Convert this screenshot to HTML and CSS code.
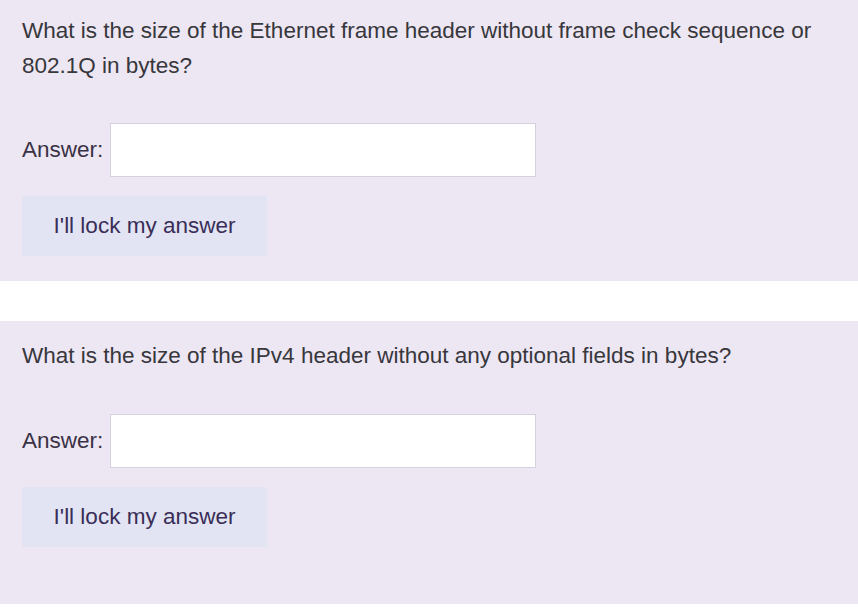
FILE: index.html
```html
<!DOCTYPE html>
<html lang="en">
<head>
<meta charset="utf-8">
<title>Quiz</title>
<link rel="stylesheet" href="styles.css">
</head>
<body>
<main class="page">
  <section class="card card-tall">
    <p class="question">What is the size of the Ethernet frame header without frame check sequence or 802.1Q in bytes?</p>
    <div class="answer-row">
      <label class="answer-label" for="a1">Answer:</label>
      <input class="answer-input" id="a1" type="text">
    </div>
    <button class="lock-btn" type="button">I'll lock my answer</button>
  </section>
  <section class="card">
    <p class="question">What is the size of the IPv4 header without any optional fields in bytes?</p>
    <div class="answer-row">
      <label class="answer-label" for="a2">Answer:</label>
      <input class="answer-input" id="a2" type="text">
    </div>
    <button class="lock-btn" type="button">I'll lock my answer</button>
  </section>
</main>
</body>
</html>
```

FILE: styles.css
```css
html, body {
  margin: 0;
  padding: 0;
  background: #ffffff;
}

body {
  font-family: "Liberation Sans", Arial, sans-serif;
  font-size: 22.5px;
  color: #37373c;
  overflow: hidden;
}

.page {
  margin-top: -5px;
  display: flex;
  flex-direction: column;
  gap: 40px;
}

.card {
  box-sizing: border-box;
  height: 283px;
  background: #ede6f3;
  padding: 17px 22px 0 22px;
  display: flex;
  flex-direction: column;
  align-items: flex-start;
}

.card-tall {
  height: 286px;
  padding-top: 18px;
}

.card-tall .answer-row {
  margin-top: 40px;
}

.question {
  margin: 0;
  line-height: 35px;
  color: #37373c;
}

.answer-row {
  display: flex;
  align-items: center;
  margin-top: 41px;
}

.answer-label {
  color: #3a3245;
  margin-right: 7px;
}

.answer-input {
  box-sizing: border-box;
  width: 426px;
  height: 54px;
  margin: 0;
  border: 1px solid #d3d2de;
  background: #ffffff;
  font: inherit;
  padding: 0 10px;
  outline: none;
}

.lock-btn {
  margin-top: 19px;
  box-sizing: border-box;
  width: 245px;
  height: 60px;
  border: none;
  background: #e2e4f3;
  color: #392e57;
  font-family: "Liberation Sans", Arial, sans-serif;
  font-size: 22.5px;
  padding: 0;
  cursor: pointer;
}
```
